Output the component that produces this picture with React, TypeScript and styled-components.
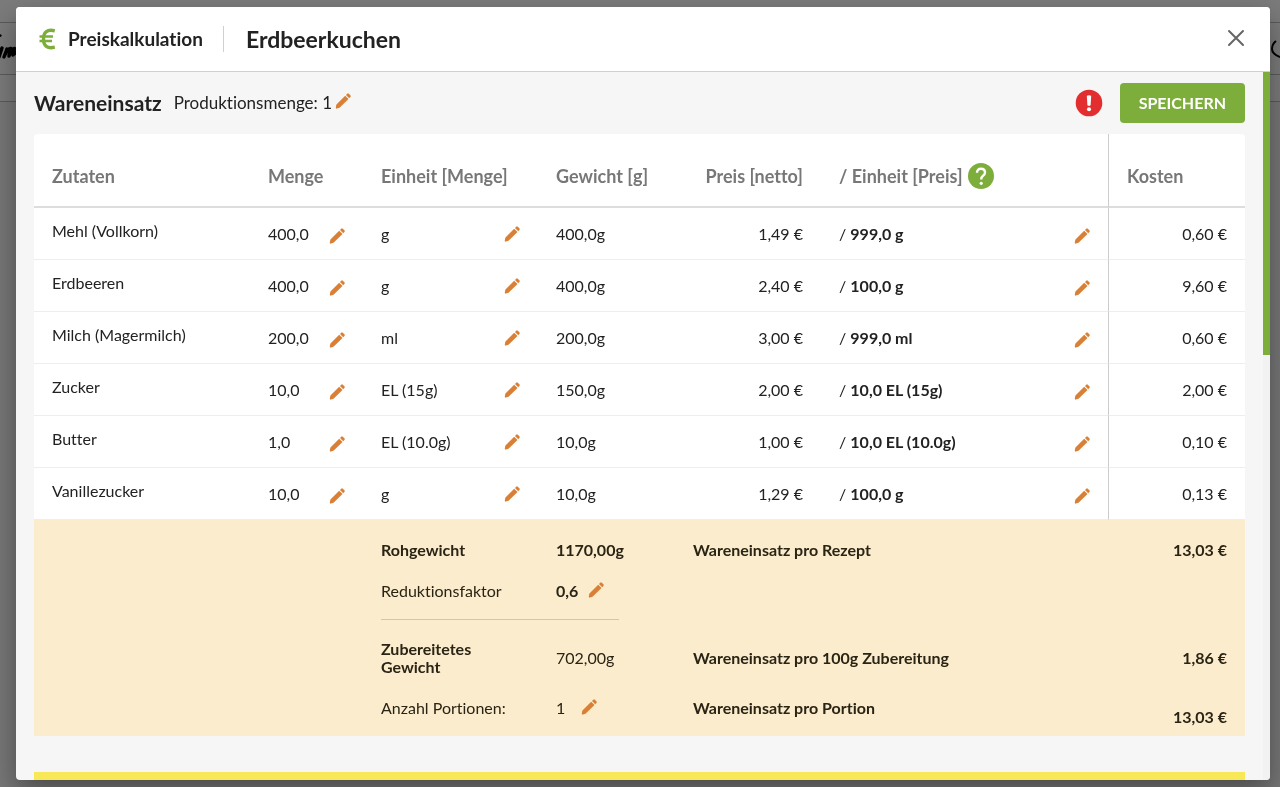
import React from 'react';
import styled, { createGlobalStyle } from 'styled-components';

const GlobalStyle = createGlobalStyle`
  * { box-sizing: border-box; }
  body {
    margin: 0;
    background: #f6f6f6;
    color: #222;
    font: 16px/20px Lato, sans-serif;
    font-variant-ligatures: none;
  }
  button { font: inherit; color: inherit; border: 0; padding: 0; background: none; cursor: pointer; }
  h1, h2, p { margin: 0; }
`;

const Page = styled.div`
  min-height: 100vh;
`;
const UtilityBar = styled.div`
  height: 23px;
  background: #fff;
  border-bottom: 1px solid #bbb;
`;
const SiteHeader = styled.div`
  display: flex;
  justify-content: space-between;
  align-items: center;
  height: 52px;
  background: #fff;
  border-bottom: 1px solid #bbb;
`;
const SiteNav = styled.div`
  height: 27px;
  background: #fff;
  border-bottom: 1px solid #bbb;
`;

const Overlay = styled.div`
  position: fixed;
  inset: 0;
  display: flex;
  padding: 7px 10px 7px 16px;
  background: rgba(0, 0, 0, 0.52);
`;
const Dialog = styled.section`
  flex: 1;
  display: flex;
  flex-direction: column;
  min-width: 0;
  overflow: hidden;
  border-radius: 4px;
  background: #f6f6f6;
  box-shadow: 0 12px 28px rgba(0, 0, 0, 0.36);
`;
const DialogHeader = styled.header`
  flex: none;
  display: flex;
  align-items: center;
  height: 65px;
  padding: 0 24px 0 22px;
  background: #fff;
  border-bottom: 1px solid #d0d0d0;
`;
const Section = styled.p`
  margin-left: 11px;
  padding-right: 20px;
  border-right: 1px solid #d0d0d0;
  font-size: 19px;
  font-weight: 700;
  line-height: 26px;
`;
const Title = styled.h1`
  flex: 1;
  margin-left: 22px;
  font-size: 23px;
  line-height: 26px;
`;
const CloseButton = styled.button`
  display: flex;
  padding-bottom: 3px;
`;

const Scroller = styled.div`
  flex: 1;
  display: flex;
  min-height: 0;
`;
const Content = styled.div`
  flex: 1;
  min-width: 0;
  padding: 0 18px;
  overflow: hidden;
`;
const Track = styled.div`
  flex: none;
  width: 7px;
  background: #f2f2f2;
`;
const Thumb = styled.div`
  height: 40%;
  background: #7dad3a;
`;

const Toolbar = styled.div`
  display: flex;
  align-items: center;
  height: 62px;
`;
const Heading = styled.h2`
  font-size: 21px;
  line-height: 24px;
`;
const Batch = styled.p`
  flex: 1;
  display: flex;
  align-items: flex-start;
  gap: 3px;
  margin-left: 12px;
  font-size: 17px;
`;
const SaveButton = styled.button`
  height: 40px;
  margin-left: 17px;
  padding: 0 19px;
  border-radius: 4px;
  background: #7dad3a;
  color: #fff;
  font-weight: 700;
`;

const Table = styled.table`
  width: 100%;
  table-layout: fixed;
  border-collapse: separate;
  border-spacing: 0;
  background: #fff;
  border-radius: 4px 4px 0 0;
`;
const Col = styled.col<{ $w?: number }>`
  width: ${(p) => (p.$w ? `${p.$w}px` : 'auto')};
`;
const HeadCell = styled.th<{ $right?: boolean; $divided?: boolean }>`
  height: 74px;
  padding: 12px 18px 0;
  border-bottom: 2px solid #ddd;
  border-left: ${(p) => (p.$divided ? '1px solid #ccc' : '0')};
  color: #777;
  font-size: 18px;
  text-align: ${(p) => (p.$right ? 'right' : 'left')};
  white-space: nowrap;
`;
const HeadLabel = styled.span`
  display: flex;
  align-items: center;
  gap: 5px;
`;
const Cell = styled.td<{ $right?: boolean; $divided?: boolean; $raised?: boolean }>`
  height: 52px;
  padding: 0 18px ${(p) => (p.$raised ? 6 : 0)}px;
  border-bottom: 1px solid #eee;
  border-left: ${(p) => (p.$divided ? '1px solid #ccc' : '0')};
  text-align: ${(p) => (p.$right ? 'right' : 'left')};
  white-space: nowrap;
`;
const Editable = styled.div<{ $low?: boolean }>`
  display: flex;
  justify-content: space-between;
  align-items: ${(p) => (p.$low ? 'flex-end' : 'center')};
`;
const EditButton = styled.button`
  display: flex;
`;

const Totals = styled.tfoot`
  background: #fbeccd;
  color: #2a2415;
`;
const TotalRow = styled.tr<{ $h: number }>`
  height: ${(p) => p.$h}px;
`;
const TotalCell = styled.td<{ $bold?: boolean; $right?: boolean; $bottom?: boolean; $first?: boolean; $last?: boolean }>`
  padding: ${(p) => (p.$first ? 8 : 0)}px 18px ${(p) => (p.$last ? 10 : 0)}px;
  font-weight: ${(p) => (p.$bold ? 700 : 400)};
  line-height: 18px;
  text-align: ${(p) => (p.$right ? 'right' : 'left')};
  vertical-align: ${(p) => (p.$bottom ? 'bottom' : 'middle')};
`;
const TotalEdit = styled.span<{ $wide?: boolean }>`
  display: flex;
  align-items: flex-start;
  gap: ${(p) => (p.$wide ? 16 : 10)}px;
`;
const Rule = styled.div`
  height: 1px;
  margin-right: 38px;
  background: #ecc46f;
`;
const NextPanel = styled.div`
  height: 60px;
  margin-top: 36px;
  background: #f8e858;
`;

const Pencil = () => (
  <EditButton type="button" aria-label="Bearbeiten">
    <svg width="16" height="16" viewBox="0 0 16 16" fill="#d98036" aria-hidden="true">
      <path d="M10.2 2.7 13.5 6 4.8 14.6Q4.4 15 3.9 15.1L1.8 15.6Q.6 15.8.8 14.6L1.2 12.3Q1.3 11.8 1.7 11.3Z" />
      <path d="m11 1.9 1.2-1.2q.8-.8 1.6 0l1.6 1.6q.8.8 0 1.6L14.2 5.2Z" />
    </svg>
  </EditButton>
);

const rows = [
  ['Mehl (Vollkorn)', '400,0', 'g', '400,0g', '1,49', '999,0 g', '0,60'],
  ['Erdbeeren', '400,0', 'g', '400,0g', '2,40', '100,0 g', '9,60'],
  ['Milch (Magermilch)', '200,0', 'ml', '200,0g', '3,00', '999,0 ml', '0,60'],
  ['Zucker', '10,0', 'EL (15g)', '150,0g', '2,00', '10,0 EL (15g)', '2,00'],
  ['Butter', '1,0', 'EL (10.0g)', '10,0g', '1,00', '10,0 EL (10.0g)', '0,10'],
  ['Vanillezucker', '10,0', 'g', '10,0g', '1,29', '100,0 g', '0,13'],
];

export default function App() {
  return (
    <>
      <GlobalStyle />
      <Page>
        <UtilityBar />
        <SiteHeader>
          <svg width="20" height="30" viewBox="0 0 20 30" fill="none" stroke="#000" strokeLinecap="round" strokeLinejoin="round" aria-hidden="true">
            <path strokeWidth="2.4" d="M-2 3 .5 1.5" />
            <path strokeWidth="3.4" d="M-1 23 2 14M4 23 7 15 5.5 20Q8 14 11 14.5L9 22Q12 15 14.5 14.5L13 21 18 17" />
          </svg>
          <svg width="10" height="24" viewBox="0 0 10 24" fill="none" stroke="#000" strokeWidth="2" aria-hidden="true">
            <path d="M6 4Q2 7 2 12T10 20" />
          </svg>
        </SiteHeader>
        <SiteNav />
      </Page>
      <Overlay>
        <Dialog role="dialog" aria-modal="true" aria-labelledby="dialog-title">
          <DialogHeader>
            <svg width="19" height="24" viewBox="0 0 19 24" fill="none" stroke="#7dad3a" aria-hidden="true">
              <path strokeWidth="3.4" d="M16.8 3.8Q5.5 1.2 5.5 12T16.8 20.2" />
              <path strokeWidth="2.4" d="M1.5 9.5H15M1.5 14H14" />
            </svg>
            <Section>Preiskalkulation</Section>
            <Title id="dialog-title">Erdbeerkuchen</Title>
            <CloseButton type="button" aria-label="Schließen">
              <svg width="20" height="20" viewBox="0 0 20 20" stroke="#666" strokeWidth="2" strokeLinecap="round" aria-hidden="true">
                <path d="m3 3 14 14M17 3 3 17" />
              </svg>
            </CloseButton>
          </DialogHeader>
          <Scroller>
            <Content>
              <Toolbar>
                <Heading>Wareneinsatz</Heading>
                <Batch>
                  Produktionsmenge: 1
                  <Pencil />
                </Batch>
                <svg width="28" height="28" viewBox="0 0 28 28" role="img" aria-label="Warnung">
                  <circle cx="14" cy="14" r="13.3" fill="#e22e2e" />
                  <path d="M11.8 6.8q2.2-1.2 4.4 0l-.6 9.4q-1.6 1-3.2 0Z" fill="#fff" />
                  <circle cx="14" cy="20.2" r="2" fill="#fff" />
                </svg>
                <SaveButton type="button">SPEICHERN</SaveButton>
              </Toolbar>
              <Table>
                <colgroup>
                  <Col $w={216} />
                  <Col $w={113} />
                  <Col $w={175} />
                  <Col $w={137} />
                  <Col $w={146} />
                  <Col />
                  <Col $w={137} />
                </colgroup>
                <thead>
                  <tr>
                    <HeadCell scope="col">Zutaten</HeadCell>
                    <HeadCell scope="col">Menge</HeadCell>
                    <HeadCell scope="col">Einheit [Menge]</HeadCell>
                    <HeadCell scope="col">Gewicht [g]</HeadCell>
                    <HeadCell scope="col" $right>Preis [netto]</HeadCell>
                    <HeadCell scope="col">
                      <HeadLabel>
                        / Einheit [Preis]
                        <svg width="26" height="26" viewBox="0 0 26 26" role="img" aria-label="Hilfe">
                          <circle cx="13" cy="13" r="13" fill="#7dad3a" />
                          <path d="M9 9.8Q9 5.8 13 5.8T17 9.5Q17 11.3 15 12.8 13.2 14.2 13.2 16.5" fill="none" stroke="#fff" strokeWidth="2.4" />
                          <circle cx="13.2" cy="20.3" r="1.6" fill="#fff" />
                        </svg>
                      </HeadLabel>
                    </HeadCell>
                    <HeadCell scope="col" $divided>Kosten</HeadCell>
                  </tr>
                </thead>
                <tbody>
                  {rows.map(([name, amount, unit, weight, price, priceUnit, cost]) => (
                    <tr key={name}>
                      <Cell $raised>{name}</Cell>
                      <Cell>
                        <Editable $low>{amount}<Pencil /></Editable>
                      </Cell>
                      <Cell>
                        <Editable>{unit}<Pencil /></Editable>
                      </Cell>
                      <Cell>{weight}</Cell>
                      <Cell $right>{price} €</Cell>
                      <Cell>
                        <Editable $low><span>/ <b>{priceUnit}</b></span><Pencil /></Editable>
                      </Cell>
                      <Cell $right $divided>{cost} €</Cell>
                    </tr>
                  ))}
                </tbody>
                <Totals>
                  <TotalRow $h={51}>
                    <TotalCell colSpan={2} $first />
                    <TotalCell $first $bold>Rohgewicht</TotalCell>
                    <TotalCell $first $bold>1170,00g</TotalCell>
                    <TotalCell $first $bold colSpan={2}>Wareneinsatz pro Rezept</TotalCell>
                    <TotalCell $first $bold $right>13,03 €</TotalCell>
                  </TotalRow>
                  <TotalRow $h={40}>
                    <TotalCell colSpan={2} />
                    <TotalCell>Reduktionsfaktor</TotalCell>
                    <TotalCell $bold><TotalEdit>0,6<Pencil /></TotalEdit></TotalCell>
                    <TotalCell colSpan={3} />
                  </TotalRow>
                  <TotalRow $h={16}>
                    <TotalCell colSpan={2} />
                    <TotalCell colSpan={2}><Rule /></TotalCell>
                    <TotalCell colSpan={3} />
                  </TotalRow>
                  <TotalRow $h={62}>
                    <TotalCell colSpan={2} />
                    <TotalCell $bold>Zubereitetes Gewicht</TotalCell>
                    <TotalCell>702,00g</TotalCell>
                    <TotalCell $bold colSpan={2}>Wareneinsatz pro 100g Zubereitung</TotalCell>
                    <TotalCell $bold $right>1,86 €</TotalCell>
                  </TotalRow>
                  <TotalRow $h={47}>
                    <TotalCell colSpan={2} $last />
                    <TotalCell $last>Anzahl Portionen:</TotalCell>
                    <TotalCell $last><TotalEdit $wide>1<Pencil /></TotalEdit></TotalCell>
                    <TotalCell $last $bold colSpan={2}>Wareneinsatz pro Portion</TotalCell>
                    <TotalCell $last $bold $right $bottom>13,03 €</TotalCell>
                  </TotalRow>
                </Totals>
              </Table>
              <NextPanel />
            </Content>
            <Track>
              <Thumb />
            </Track>
          </Scroller>
        </Dialog>
      </Overlay>
    </>
  );
}
